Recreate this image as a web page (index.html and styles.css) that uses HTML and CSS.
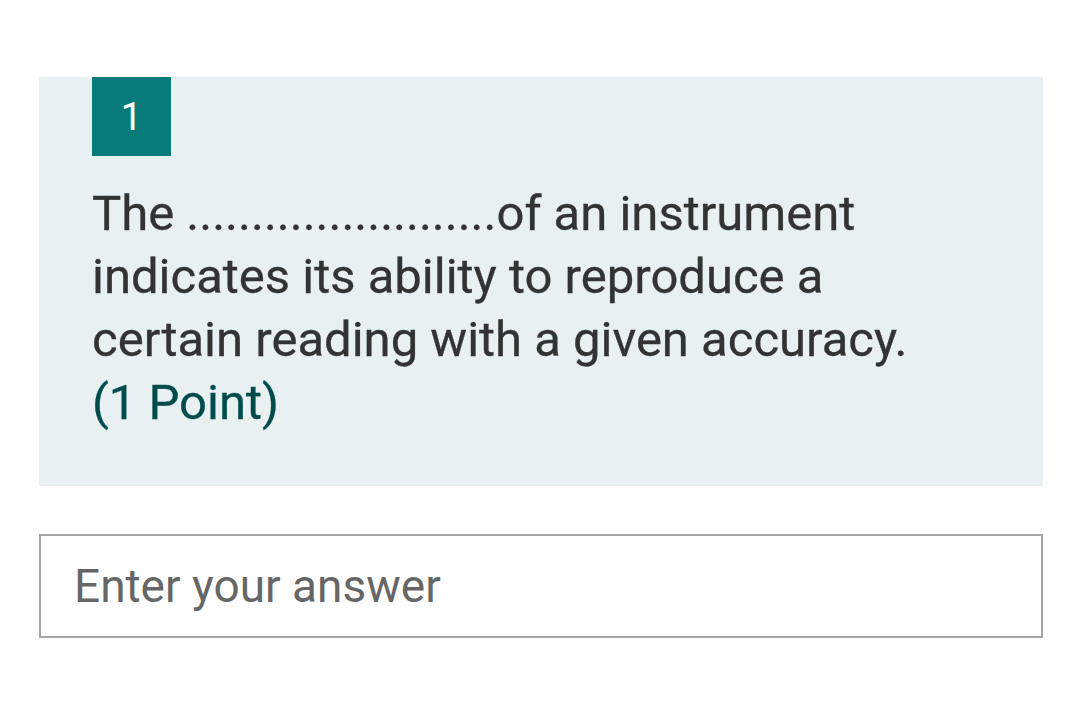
FILE: index.html
```html
<!DOCTYPE html>
<html>
<head>
<meta charset="utf-8">
<link rel="stylesheet" href="styles.css">
</head>
<body>
<div class="page">
  <section class="question">
    <div class="badge">1</div>
    <div class="title">The ........................of an instrument indicates its ability to reproduce a certain reading with a given accuracy.<br><span class="points">(1 Point)</span></div>
  </section>
  <div class="answer">Enter your answer</div>
</div>
</body>
</html>
```
FILE: styles.css
```css
html, body {
  margin: 0;
  padding: 0;
  background: #ffffff;
}
body {
  font-family: Roboto, "Noto Sans", sans-serif;
}
.page {
  padding: 77px 37px 0 39px;
}
.question {
  background: #e8f0f2;
  padding: 0 53px 0 53px;
  height: 409px;
  box-sizing: border-box;
}
.badge {
  width: 79px;
  height: 79px;
  background: #077a7a;
  color: #ffffff;
  font-size: 38px;
  display: flex;
  align-items: center;
  justify-content: center;
}
.title {
  margin-top: 26px;
  font-size: 49px;
  line-height: 63px;
  color: #333333;
  max-width: 840px;
  -webkit-text-stroke: 0.3px #333333;
}
.points {
  color: #004c4c;
  -webkit-text-stroke: 0.3px #004c4c;
}
.answer {
  margin-top: 48px;
  height: 104px;
  box-sizing: border-box;
  border: 2px solid #a6a6a6;
  padding-left: 33px;
  display: flex;
  align-items: center;
  font-size: 46px;
  color: #666666;
}
```
